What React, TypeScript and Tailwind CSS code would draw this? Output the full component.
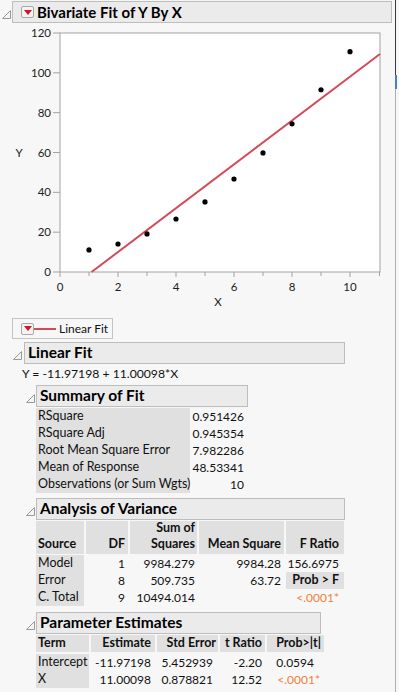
import React from "react";

const pts: [number, number][] = [
  [1, 11.06],
  [2, 14.07],
  [3, 19.1],
  [4, 26.6],
  [5, 35.2],
  [6, 46.7],
  [7, 59.8],
  [8, 74.4],
  [9, 91.5],
  [10, 110.6],
];

const px = (x: number) => 60 + 29 * x;
const py = (y: number) => 272 - (239 / 120) * y;

function Disclosure() {
  return (
    <svg width="9" height="9" viewBox="0 0 9 9" className="shrink-0">
      <path d="M0.5 8.5 L8.5 8.5 L8.5 0.5 Z" fill="#f4f4f4" stroke="#9a9a9a" strokeWidth="1" />
    </svg>
  );
}

function RedMenu() {
  return (
    <div className="w-[13px] h-[12px] rounded-[2px] border border-[#a8a8a8] bg-[#f3f3f3] flex items-center justify-center shrink-0">
      <svg width="8" height="5" viewBox="0 0 8 5">
        <path d="M0 0 L8 0 L4 5 Z" fill="#d4142c" />
      </svg>
    </div>
  );
}

function Header({ title, width }: { title: string; width: string }) {
  return (
    <div
      className={`${width} h-[22px] bg-[#ebebeb] border border-[#bdbdbd] flex items-center pl-[3px] text-[15.5px] font-bold text-black leading-none whitespace-nowrap`}
    >
      {title}
    </div>
  );
}

function Plot() {
  const xStart = 11.97198 / 11.00098;
  const xEnd = 320 / 29;
  const tf = { fontSize: 11.5, fill: "#1c1c1c", fontFamily: "Lato, sans-serif" };
  return (
    <svg width="395" height="295" viewBox="0 23 395 295" className="block">
      <rect x="60" y="33" width="320" height="239" fill="#ffffff" stroke="#a3a3a3" strokeWidth="1" />
      {[0, 20, 40, 60, 80, 100, 120].map((v) => (
        <g key={v}>
          <line x1="53" x2="60" y1={py(v)} y2={py(v)} stroke="#a3a3a3" />
          <text x="51" y={py(v) + 4} textAnchor="end" {...tf}>
            {v}
          </text>
        </g>
      ))}
      {[0, 1, 2, 3, 4, 5, 6, 7, 8, 9, 10, 11].map((v) => (
        <line
          key={v}
          x1={v === 11 ? 379.5 : px(v)}
          x2={v === 11 ? 379.5 : px(v)}
          y1="272"
          y2={v % 2 === 0 ? 277 : 276}
          stroke="#a3a3a3"
        />
      ))}
      {[0, 2, 4, 6, 8, 10].map((v) => (
        <text key={v} x={px(v)} y="291" textAnchor="middle" {...tf}>
          {v}
        </text>
      ))}
      <text x="218" y="306" textAnchor="middle" {...tf}>
        X
      </text>
      <text x="19" y="157" textAnchor="middle" {...tf}>
        Y
      </text>
      <line
        x1={px(xStart)}
        y1={py(0)}
        x2={px(xEnd)}
        y2={py(-11.97198 + 11.00098 * xEnd)}
        stroke="#d44a5a"
        strokeWidth="2"
      />
      {pts.map(([x, y]) => (
        <circle key={x} cx={px(x)} cy={py(y)} r="2.6" fill="#000" />
      ))}
    </svg>
  );
}

export default function App() {
  const cell = "h-[17px] flex items-center whitespace-nowrap";
  const gray = "bg-[#e0e0e0]";
  const lbl = "text-[12.5px]";
  return (
    <div className="w-[399px] h-[692px] bg-[#f7f7f7] flex overflow-hidden font-['Lato',sans-serif] text-[12px] text-[#111] leading-none">
      <div className="w-[395px] flex flex-col">
        {/* Title */}
        <div className="flex items-center mt-[1px]">
          <div className="w-[12px] pl-[2px] pt-[4px]">
            <Disclosure />
          </div>
          <div className="w-[380px] h-[22px] bg-[#ebebeb] border border-[#bdbdbd] flex items-center gap-[3px] pl-[8px] text-[15px] font-bold text-black">
            <RedMenu />
            <span>Bivariate Fit of Y By X</span>
          </div>
        </div>

        <Plot />

        {/* Legend */}
        <div className="ml-[12px] w-[101px] h-[21px] border border-[#c4c4c4] flex items-center pl-[8px] whitespace-nowrap">
          <RedMenu />
          <div className="w-[22px] h-[2px] bg-[#d44a5a]" />
          <span className="ml-[3px] text-[12px]">Linear Fit</span>
        </div>

        {/* Linear Fit */}
        <div className="flex items-center mt-[3px]">
          <div className="w-[24px] pl-[13px] pt-[4px]">
            <Disclosure />
          </div>
          <Header title="Linear Fit" width="w-[321px]" />
        </div>
        <div className="pl-[22px] h-[18px] flex items-center mt-[1px] text-[12.2px]">Y = -11.97198 + 11.00098*X</div>

        {/* Summary of Fit */}
        <div className="flex items-center mt-[2px]">
          <div className="w-[36px] pl-[26px] pt-[4px]">
            <Disclosure />
          </div>
          <Header title="Summary of Fit" width="w-[212px]" />
        </div>
        <div className="ml-[36px] mt-[1px] grid grid-cols-[154px_58px]">
          {[
            ["RSquare", "0.951426"],
            ["RSquare Adj", "0.945354"],
            ["Root Mean Square Error", "7.982286"],
            ["Mean of Response", "48.53341"],
            ["Observations (or Sum Wgts)", "10"],
          ].map(([k, v]) => (
            <React.Fragment key={k}>
              <div className={`${cell} ${gray} ${lbl} pl-[2px]`}>{k}</div>
              <div className={`${cell} justify-end pr-[4px]`}>{v}</div>
            </React.Fragment>
          ))}
        </div>

        {/* Analysis of Variance */}
        <div className="flex items-center mt-[5px]">
          <div className="w-[36px] pl-[26px] pt-[4px]">
            <Disclosure />
          </div>
          <Header title="Analysis of Variance" width="w-[309px]" />
        </div>
        <div className="ml-[36px] mt-[1px] grid grid-cols-[48px_42px_67px_85px_58px] gap-x-[2px]">
          <div className={`h-[33px] ${gray} ${lbl} flex items-end pb-[4px] pl-[2px] font-bold`}>Source</div>
          <div className={`h-[33px] ${gray} ${lbl} flex items-end justify-end pb-[4px] pr-[3px] font-bold`}>DF</div>
          <div className={`h-[33px] ${gray} ${lbl} flex flex-col items-end justify-end pb-[4px] pr-[2px] gap-[3px] font-bold`}>
            <span>Sum of</span>
            <span>Squares</span>
          </div>
          <div className={`h-[33px] ${gray} ${lbl} flex items-end justify-end pb-[4px] pr-[3px] font-bold whitespace-nowrap`}>Mean Square</div>
          <div className={`h-[33px] ${gray} ${lbl} flex items-end justify-end pb-[4px] pr-[5px] font-bold`}>F Ratio</div>

          <div className={`${cell} ${gray} ${lbl} pl-[2px] mt-[1px]`}>Model</div>
          <div className={`${cell} justify-end pr-[3px] mt-[1px]`}>1</div>
          <div className={`${cell} justify-end pr-[2px] mt-[1px]`}>9984.279</div>
          <div className={`${cell} justify-end pr-[3px] mt-[1px]`}>9984.28</div>
          <div className={`${cell} justify-end pr-[5px] mt-[1px]`}>156.6975</div>

          <div className={`${cell} ${gray} ${lbl} pl-[2px]`}>Error</div>
          <div className={`${cell} justify-end pr-[3px]`}>8</div>
          <div className={`${cell} justify-end pr-[2px]`}>509.735</div>
          <div className={`${cell} justify-end pr-[3px]`}>63.72</div>
          <div className={`${cell} ${gray} ${lbl} justify-end pr-[5px] font-bold`}>Prob &gt; F</div>

          <div className={`${cell} ${gray} ${lbl} pl-[2px]`}>C. Total</div>
          <div className={`${cell} justify-end pr-[3px]`}>9</div>
          <div className={`${cell} justify-end pr-[2px]`}>10494.014</div>
          <div className={cell} />
          <div className={`${cell} justify-end pr-[5px] text-[#f0803c]`}>&lt;.0001*</div>
        </div>

        {/* Parameter Estimates */}
        <div className="flex items-center mt-[6px]">
          <div className="w-[36px] pl-[26px] pt-[4px]">
            <Disclosure />
          </div>
          <Header title="Parameter Estimates" width="w-[285px]" />
        </div>
        <div className="ml-[36px] mt-[1px] grid grid-cols-[53px_64px_61px_45px_57px] gap-x-[2px]">
          <div className={`${cell} ${gray} ${lbl} pl-[2px] font-bold`}>Term</div>
          <div className={`${cell} ${gray} ${lbl} justify-end pr-[4px] font-bold`}>Estimate</div>
          <div className={`${cell} ${gray} ${lbl} justify-end pr-[2px] font-bold`}>Std Error</div>
          <div className={`${cell} ${gray} ${lbl} justify-end pr-[3px] font-bold`}>t Ratio</div>
          <div className={`${cell} ${gray} ${lbl} justify-end pr-[3px] font-bold`}>Prob&gt;|t|</div>

          <div className={`${cell} ${gray} ${lbl} pl-[2px] mt-[2px]`}>Intercept</div>
          <div className={`${cell} justify-end pr-[4px] mt-[2px]`}>-11.97198</div>
          <div className={`${cell} justify-end pr-[5px] mt-[2px]`}>5.452939</div>
          <div className={`${cell} justify-end pr-[3px] mt-[2px]`}>-2.20</div>
          <div className={`${cell} justify-end pr-[10px] mt-[2px]`}>0.0594</div>

          <div className={`${cell} ${gray} ${lbl} pl-[2px]`}>X</div>
          <div className={`${cell} justify-end pr-[4px]`}>11.00098</div>
          <div className={`${cell} justify-end pr-[5px]`}>0.878821</div>
          <div className={`${cell} justify-end pr-[3px]`}>12.52</div>
          <div className={`${cell} justify-end pr-[4px] text-[#f0803c]`}>&lt;.0001*</div>
        </div>
      </div>

      {/* window edge */}
      <div className="w-[4px] flex flex-col">
        <div className="w-[1px] h-[75px] bg-[#3a3a3a]" />
        <div className="w-[2px] h-[14px] bg-[#4a7fc0]" />
        <div className="w-[1px] flex-1 bg-[#b0b0b0]" />
      </div>
    </div>
  );
}
